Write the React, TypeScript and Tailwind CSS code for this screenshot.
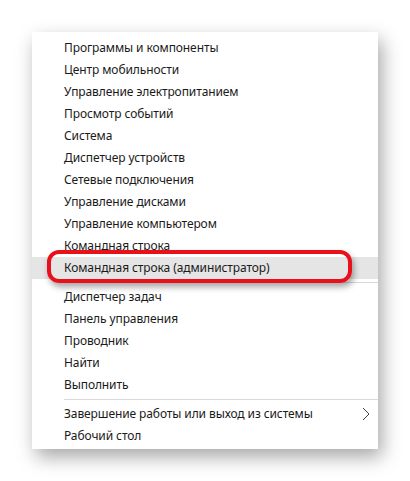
import React from "react";

const topItems = [
  "Программы и компоненты",
  "Центр мобильности",
  "Управление электропитанием",
  "Просмотр событий",
  "Система",
  "Диспетчер устройств",
  "Сетевые подключения",
  "Управление дисками",
  "Управление компьютером",
  "Командная строка",
];

const midItems = ["Диспетчер задач", "Панель управления", "Проводник", "Найти", "Выполнить"];

const Row = ({ label }: { label: string }) => (
  <div className="flex h-[22px] items-center pl-8 pr-2">
    <span>{label}</span>
  </div>
);

const Separator = () => <div className="my-[3px] ml-8 h-px bg-[#d9d9d9]" />;

export default function App() {
  return (
    <div className="h-[481px] w-[410px] bg-white pl-8 pt-8">
      <div className="w-[346px] bg-white pb-[2px] pt-[5px] font-['Noto_Sans','Open_Sans',sans-serif] text-[12px] tracking-[-0.1px] text-[#1a1a1a] shadow-[4px_8px_18px_rgba(0,0,0,0.35)]">
        {topItems.map((item) => (
          <Row key={item} label={item} />
        ))}
        <div className="relative flex h-[22px] items-center bg-[#e5e5e5] pl-8">
          <span>Командная строка (администратор)</span>
          {/* red highlight frame */}
          <div className="absolute left-[15px] top-[-7px] h-[33px] w-[305px] rounded-[12px] border-[4px] border-[#e8101a] shadow-[2px_4px_6px_rgba(0,0,0,0.35)]" />
        </div>
        <Separator />
        {midItems.map((item) => (
          <Row key={item} label={item} />
        ))}
        <Separator />
        <div className="flex h-[22px] items-center justify-between pl-8 pr-[7px]">
          <span>Завершение работы или выход из системы</span>
          <svg width="10" height="14" viewBox="0 0 10 14" fill="none" stroke="#444" strokeWidth="1">
            <path d="M2 1l6 6-6 6" />
          </svg>
        </div>
        <Row label="Рабочий стол" />
      </div>
    </div>
  );
}
